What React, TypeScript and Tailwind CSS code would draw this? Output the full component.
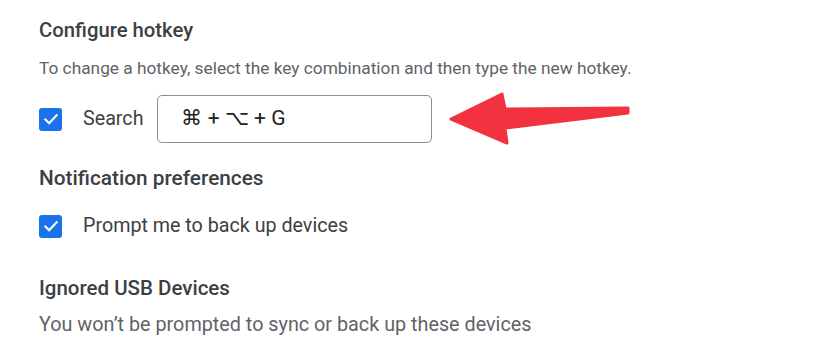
import React from "react";

function Check() {
  return (
    <div className="w-[23px] h-[23px] rounded-[3px] bg-[#1a73e8] flex items-center justify-center shrink-0">
      <svg width="18" height="18" viewBox="0 0 24 24" fill="none">
        <path d="M4.5 12.5l5 5L19.5 7" stroke="white" strokeWidth="2.8" strokeLinecap="square" />
      </svg>
    </div>
  );
}

export default function App() {
  return (
    <div className="w-[825px] h-[346px] bg-white overflow-hidden relative pl-[39px] pt-[16px] text-[#3c4043]" style={{ fontFamily: "Roboto, 'Noto Sans', sans-serif" }}>
      <h2 className="text-[20.3px] leading-[28px] font-medium">Configure hotkey</h2>
      <p className="text-[17.3px] leading-[22px] text-[#5f6368] mt-[13px]">To change a hotkey, select the key combination and then type the new hotkey.</p>
      <div className="flex items-center mt-[16px] h-[48px]">
        <Check />
        <span className="text-[19.7px] ml-[21px]">Search</span>
        <div className="ml-[14px] w-[275px] h-[48px] border border-[#8a8d91] rounded-[5px] flex items-center pl-[23px] text-[21px] text-[#202124]">⌘ + ⌥ + G</div>
        <svg className="ml-[16px] shrink-0" width="185" height="60" viewBox="0 0 185 60">
          <path d="M3 30 L54 5 L57 20 L180 19 L180 24 L57 39 L59 54 Z" fill="#f2323f" stroke="#f2323f" strokeWidth="3" strokeLinejoin="round" />
        </svg>
      </div>
      <h2 className="text-[20.8px] leading-[28px] font-medium mt-[21px]">Notification preferences</h2>
      <div className="flex items-center mt-[22px] h-[24px]">
        <Check />
        <span className="text-[19.7px] ml-[21px]">Prompt me to back up devices</span>
      </div>
      <h2 className="text-[20.5px] leading-[28px] font-medium mt-[36px]">Ignored USB Devices</h2>
      <p className="text-[19.8px] leading-[26px] text-[#5f6368] mt-[10px]">You won’t be prompted to sync or back up these devices</p>
    </div>
  );
}
